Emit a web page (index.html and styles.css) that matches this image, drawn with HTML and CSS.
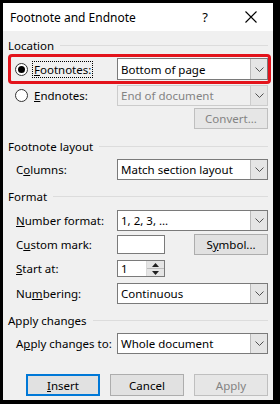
FILE: index.html
```html
<!DOCTYPE html>
<html>
<head>
<meta charset="utf-8">
<link rel="stylesheet" href="styles.css">
</head>
<body>
<div class="dialog">
  <div class="titlebar">
    <span class="title">Footnote and Endnote</span>
    <span class="help">?</span>
    <svg class="close" width="12" height="12" viewBox="0 0 12 12"><path d="M0.5 0.5L11.5 11.5M11.5 0.5L0.5 11.5" stroke="#000" stroke-width="1.1" fill="none"/></svg>
  </div>
  <div class="content">
    <div class="group"><span class="gtext">Location</span><span class="gline"></span></div>
    <div class="redbox">
      <div class="row radio-row">
        <span class="radio checked"><span class="dot"></span></span>
        <span class="focus"><u>F</u>ootnotes:</span>
        <span class="spacer"></span>
        <div class="combo"><span class="val">Bottom of page</span><span class="arrow"><svg width="9" height="5" viewBox="0 0 9 5"><path d="M0.5 0.5L4.5 4.5L8.5 0.5" stroke="#505050" fill="none"/></svg></span></div>
      </div>
    </div>
    <div class="row radio-row endrow">
      <span class="radio"></span>
      <span class="rlabel"><u>E</u>ndnotes:</span>
      <span class="spacer"></span>
      <div class="combo disabled"><span class="val">End of document</span><span class="arrow"><svg width="9" height="5" viewBox="0 0 9 5"><path d="M0.5 0.5L4.5 4.5L8.5 0.5" stroke="#505050" fill="none"/></svg></span></div>
    </div>
    <div class="btnrow convertrow"><span class="btn disabled">Convert...</span></div>

    <div class="group g2"><span class="gtext">Footnote layout</span><span class="gline"></span></div>
    <div class="row frow r-columns">
      <span class="label">C<u>o</u>lumns:</span>
      <div class="combo"><span class="val">Match section layout</span><span class="arrow"><svg width="9" height="5" viewBox="0 0 9 5"><path d="M0.5 0.5L4.5 4.5L8.5 0.5" stroke="#505050" fill="none"/></svg></span></div>
    </div>

    <div class="group g3"><span class="gtext">Format</span><span class="gline"></span></div>
    <div class="row frow r-num">
      <span class="label"><u>N</u>umber format:</span>
      <div class="combo"><span class="val">1, 2, 3, …</span><span class="arrow"><svg width="9" height="5" viewBox="0 0 9 5"><path d="M0.5 0.5L4.5 4.5L8.5 0.5" stroke="#505050" fill="none"/></svg></span></div>
    </div>
    <div class="row frow r-custom">
      <span class="label">C<u>u</u>stom mark:</span>
      <span class="textbox"></span>
      <span class="spacer"></span>
      <span class="btn symbol">S<u>y</u>mbol...</span>
    </div>
    <div class="row frow r-start">
      <span class="label"><u>S</u>tart at:</span>
      <div class="spin">
        <span class="spinval">1</span>
        <span class="spinbtns">
          <span class="sb"><svg width="7" height="4" viewBox="0 0 7 4"><path d="M0 4L3.5 0L7 4Z" fill="#202020"/></svg></span>
          <span class="sb"><svg width="7" height="4" viewBox="0 0 7 4"><path d="M0 0L3.5 4L7 0Z" fill="#202020"/></svg></span>
        </span>
      </div>
    </div>
    <div class="row frow r-numbering">
      <span class="label">Nu<u>m</u>bering:</span>
      <div class="combo"><span class="val">Continuous</span><span class="arrow"><svg width="9" height="5" viewBox="0 0 9 5"><path d="M0.5 0.5L4.5 4.5L8.5 0.5" stroke="#505050" fill="none"/></svg></span></div>
    </div>

    <div class="group g4"><span class="gtext">Apply changes</span><span class="gline"></span></div>
    <div class="row frow r-apply">
      <span class="label">A<u>p</u>ply changes to:</span>
      <div class="combo"><span class="val">Whole document</span><span class="arrow"><svg width="9" height="5" viewBox="0 0 9 5"><path d="M0.5 0.5L4.5 4.5L8.5 0.5" stroke="#505050" fill="none"/></svg></span></div>
    </div>

    <div class="buttons">
      <span class="btn big default"><u>I</u>nsert</span>
      <span class="btn big">Cancel</span>
      <span class="btn big disabled">Apply</span>
    </div>
  </div>
</div>
</body>
</html>
```

FILE: styles.css
```css
html, body {
  margin: 0;
  padding: 0;
  background: #000;
}
body {
  width: 280px;
  height: 404px;
  overflow: hidden;
  font-family: "Noto Sans", "Open Sans", sans-serif;
  font-size: 11.5px;
  color: #000;
}
.dialog {
  margin: 3px 0 0 3px;
  width: 270px;
  height: 397px;
  background: #f0f0f0;
  display: flex;
  flex-direction: column;
}
.titlebar {
  height: 28px;
  background: #fff;
  display: flex;
  align-items: center;
  padding-left: 7px;
  flex-shrink: 0;
}
.title {
  font-size: 12px;
  flex: 1;
}
.help {
  font-size: 13px;
  width: 12px;
  margin-right: 34px;
  text-align: center;
}
.close {
  margin-right: 16px;
}
.content {
  padding: 0 5px 0 5px;
  display: flex;
  flex-direction: column;
}
.group {
  height: 16px;
  display: flex;
  align-items: center;
  margin-top: 6px;
  flex-shrink: 0;
}
.gtext {
  white-space: nowrap;
  margin-right: 6px;
}
.gline {
  flex: 1;
  border-top: 1px solid #dcdcdc;
}
.g2 { margin-top: 9px; }
.g3 { margin-top: 8px; }
.g4 { margin-top: 8px; }

.row {
  display: flex;
  align-items: center;
  height: 21px;
  flex-shrink: 0;
}
.spacer { flex: 1; }

.redbox {
  margin-top: 1px;
  margin-right: -3px;
  border: 3px solid #e3131b;
  border-radius: 4px;
  height: 24px;
  display: flex;
  align-items: center;
  padding-left: 4px;
  flex-shrink: 0;
}
.redbox .row {
  flex: 1;
  height: 24px;
}
.radio {
  width: 11px;
  height: 11px;
  border: 1px solid #333;
  border-radius: 50%;
  background: #fff;
  display: flex;
  align-items: center;
  justify-content: center;
  margin-right: 5px;
  flex-shrink: 0;
}
.dot {
  width: 7px;
  height: 7px;
  border-radius: 50%;
  background: #000;
}
.focus {
  outline: 1px dotted #000;
  outline-offset: 0;
  padding: 0 1px;
  line-height: 15px;
}
.rlabel { padding: 0 1px; }
.endrow {
  margin-top: 1px;
  padding-left: 7px;
}

.combo {
  width: 149px;
  height: 19px;
  border: 1px solid #7a7a7a;
  background: #fff;
  display: flex;
  align-items: stretch;
  flex-shrink: 0;
}
.redbox .combo { height: 20px; }
.combo .val {
  flex: 1;
  padding-left: 3px;
  display: flex;
  align-items: center;
  white-space: nowrap;
  overflow: hidden;
}
.combo .arrow {
  width: 16px;
  border-left: 1px solid #b9b9b9;
  background: #e5e5e5;
  display: flex;
  align-items: center;
  justify-content: center;
}
.combo.disabled {
  background: #f0f0f0;
  border-color: #cccccc;
  color: #838383;
}
.combo.disabled .arrow {
  background: #e5e5e5;
  border-left-color: #cccccc;
}

.btn {
  width: 72px;
  height: 19px;
  border: 1px solid #adadad;
  background: #e1e1e1;
  display: flex;
  align-items: center;
  justify-content: center;
  box-sizing: content-box;
  white-space: nowrap;
}
.btn.big { height: 20px; }
.btn.disabled {
  background: #e6e6e6;
  border-color: #bfbfbf;
  color: #838383;
}
.btn.default {
  border: 2px solid #0078d7;
  width: 70px;
  height: 18px;
}
.btnrow {
  display: flex;
  justify-content: flex-end;
  margin-top: 2px;
  flex-shrink: 0;
}

.frow {
  padding-left: 8px;
}
.label {
  width: 101px;
  flex-shrink: 0;
  white-space: nowrap;
}
.r-columns { margin-top: 5px; }
.r-num { margin-top: 6px; }
.r-custom { margin-top: 3px; }
.textbox {
  width: 46px;
  height: 17px;
  border: 1px solid #7a7a7a;
  background: #fff;
}
.r-start {
  margin-top: 5px;
  height: 17px;
}
.spin {
  width: 46px;
  height: 15px;
  border: 1px solid #7a7a7a;
  background: #fff;
  display: flex;
}
.spinval {
  flex: 1;
  padding-left: 3px;
  line-height: 15px;
}
.spinbtns {
  width: 17px;
  display: flex;
  flex-direction: column;
  border-left: 1px solid #dadada;
}
.sb {
  flex: 1;
  background: #e5e5e5;
  display: flex;
  align-items: center;
  justify-content: center;
}
.sb + .sb { border-top: 1px solid #bdbdbd; }
.r-numbering { margin-top: 6px; }
.r-apply { margin-top: 5px; }

.buttons {
  margin-top: 20px;
  display: flex;
  justify-content: flex-end;
  gap: 10px;
  flex-shrink: 0;
}
```
